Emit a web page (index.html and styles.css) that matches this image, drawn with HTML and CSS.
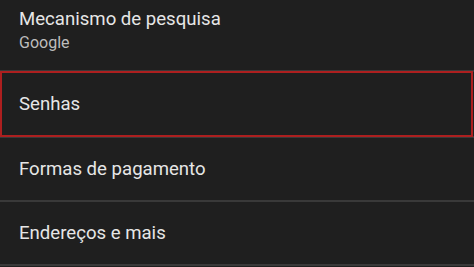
FILE: index.html
```html
<!DOCTYPE html>
<html lang="pt">
<head>
<meta charset="utf-8">
<link rel="stylesheet" href="styles.css">
</head>
<body>
<div class="list">
  <div class="row row-top">
    <div class="title">Mecanismo de pesquisa</div>
    <div class="subtitle">Google</div>
  </div>
  <div class="row row-item highlighted">
    <div class="title">Senhas</div>
  </div>
  <div class="row row-item">
    <div class="title">Formas de pagamento</div>
  </div>
  <div class="row row-item">
    <div class="title">Endereços e mais</div>
  </div>
</div>
</body>
</html>
```
FILE: styles.css
```css
html, body {
  margin: 0;
  padding: 0;
  background: #1f1f1f;
}
body {
  width: 474px;
  height: 267px;
  overflow: hidden;
  font-family: Roboto, "Noto Sans", sans-serif;
}
.list {
  display: flex;
  flex-direction: column;
}
.row {
  box-sizing: border-box;
  padding-left: 19px;
  border-bottom: 2px solid #393939;
}
.row-top {
  height: 72px;
  padding-top: 7px;
}
.row-item {
  height: 64px;
  display: flex;
  align-items: center;
}
.title {
  font-size: 18.6px;
  line-height: 24px;
  color: #e6e6e6;
}
.subtitle {
  font-size: 16px;
  line-height: 20px;
  margin-top: 2px;
  color: #bdbdbd;
}
.highlighted {
  position: relative;
  height: 66px;
}
.highlighted::after {
  content: "";
  position: absolute;
  left: 0;
  right: 1px;
  top: -1px;
  bottom: -1px;
  border: 2px solid #ad1f1f;
}
```
